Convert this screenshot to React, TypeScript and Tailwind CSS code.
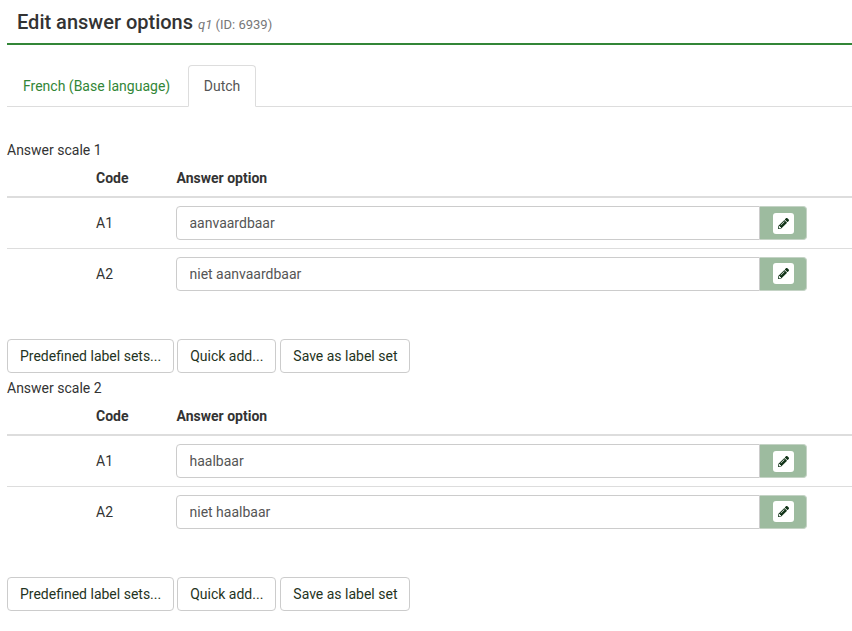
import { FaPencilAlt } from "react-icons/fa";

const AnswerRow = ({ code, value, last }: { code: string; value: string; last?: boolean }) => {
  return (
    <div className={`flex items-center ${last ? "h-[50px] pb-[1px]" : "h-[51px] border-b border-[#ddd]"}`}>
      <div className={`pl-[89px] w-[169px] shrink-0 text-[#333] ${last ? "pt-[1px]" : ""}`}>{code}</div>
      <div className="flex w-[631px] h-[34px]">
        <input
          readOnly
          value={value}
          className="flex-1 min-w-0 h-full pl-[12.5px] pr-3 border border-[#ccc] rounded-l-[4px] bg-white text-[#555] text-[14px] outline-none"
        />
        <div className="flex justify-center items-center w-[47px] h-full bg-[#9dbb9f] border border-[#c4d3c5] border-l-0 rounded-r-[4px]">
          <span className="flex justify-center items-center bg-white rounded-[3px] w-[21px] h-[21px]">
            <FaPencilAlt className="text-[#123318] text-[11px]" />
          </span>
        </div>
      </div>
    </div>
  );
};

const AnswerScale = ({ title, rows }: { title: string; rows: string[] }) => {
  return (
    <div>
      <div className="h-5 leading-5 text-[#333]">{title}</div>
      <div className="flex items-center h-[38px] border-b-2 border-[#ddd] font-bold text-[#333]">
        <div className="pl-[89px] w-[169.5px] shrink-0">Code</div>
        <div>Answer option</div>
      </div>
      <AnswerRow code="A1" value={rows[0]} />
      <AnswerRow code="A2" value={rows[1]} last />
      <div className="flex gap-[3px] mt-10">
        <button className="px-3 h-[34px] border border-[#ccc] rounded-[4px] bg-white text-[#1f3322]">
          Predefined label sets...
        </button>
        <button className="px-3 h-[34px] border border-[#ccc] rounded-[4px] bg-white text-[#1f3322]">
          Quick add...
        </button>
        <button className="ml-[1px] px-3 h-[34px] border border-[#ccc] rounded-[4px] bg-white text-[#1f3322]">
          Save as label set
        </button>
      </div>
    </div>
  );
};

export default function App() {
  return (
    <div className="pl-[7px] h-[631px] overflow-hidden bg-white font-['Roboto',sans-serif] text-[14px]">
      <div className="flex items-baseline h-[45px] pl-[10px] pt-[7px] border-b-2 border-[#328637]">
        <span className="font-medium text-[20px] text-[#333]">Edit answer options</span>
        <span className="ml-[5px] text-[13px] text-[#777]">
          <em>q1</em> (ID: 6939)
        </span>
      </div>

      <div className="flex mt-5 h-[42px] border-b border-[#ddd]">
        <div className="flex items-center pl-4 pt-[1px] w-[181px] text-[#328637]">French (Base language)</div>
        <div className="flex justify-center items-center w-[68px] h-[42px] bg-white border border-[#ddd] border-b-white rounded-t-[4px] text-[#555]">
          Dutch
        </div>
      </div>

      <div className="mt-[33px]">
        <AnswerScale title="Answer scale 1" rows={["aanvaardbaar", "niet aanvaardbaar"]} />
      </div>
      <div className="mt-[5px]">
        <AnswerScale title="Answer scale 2" rows={["haalbaar", "niet haalbaar"]} />
      </div>
    </div>
  );
}
